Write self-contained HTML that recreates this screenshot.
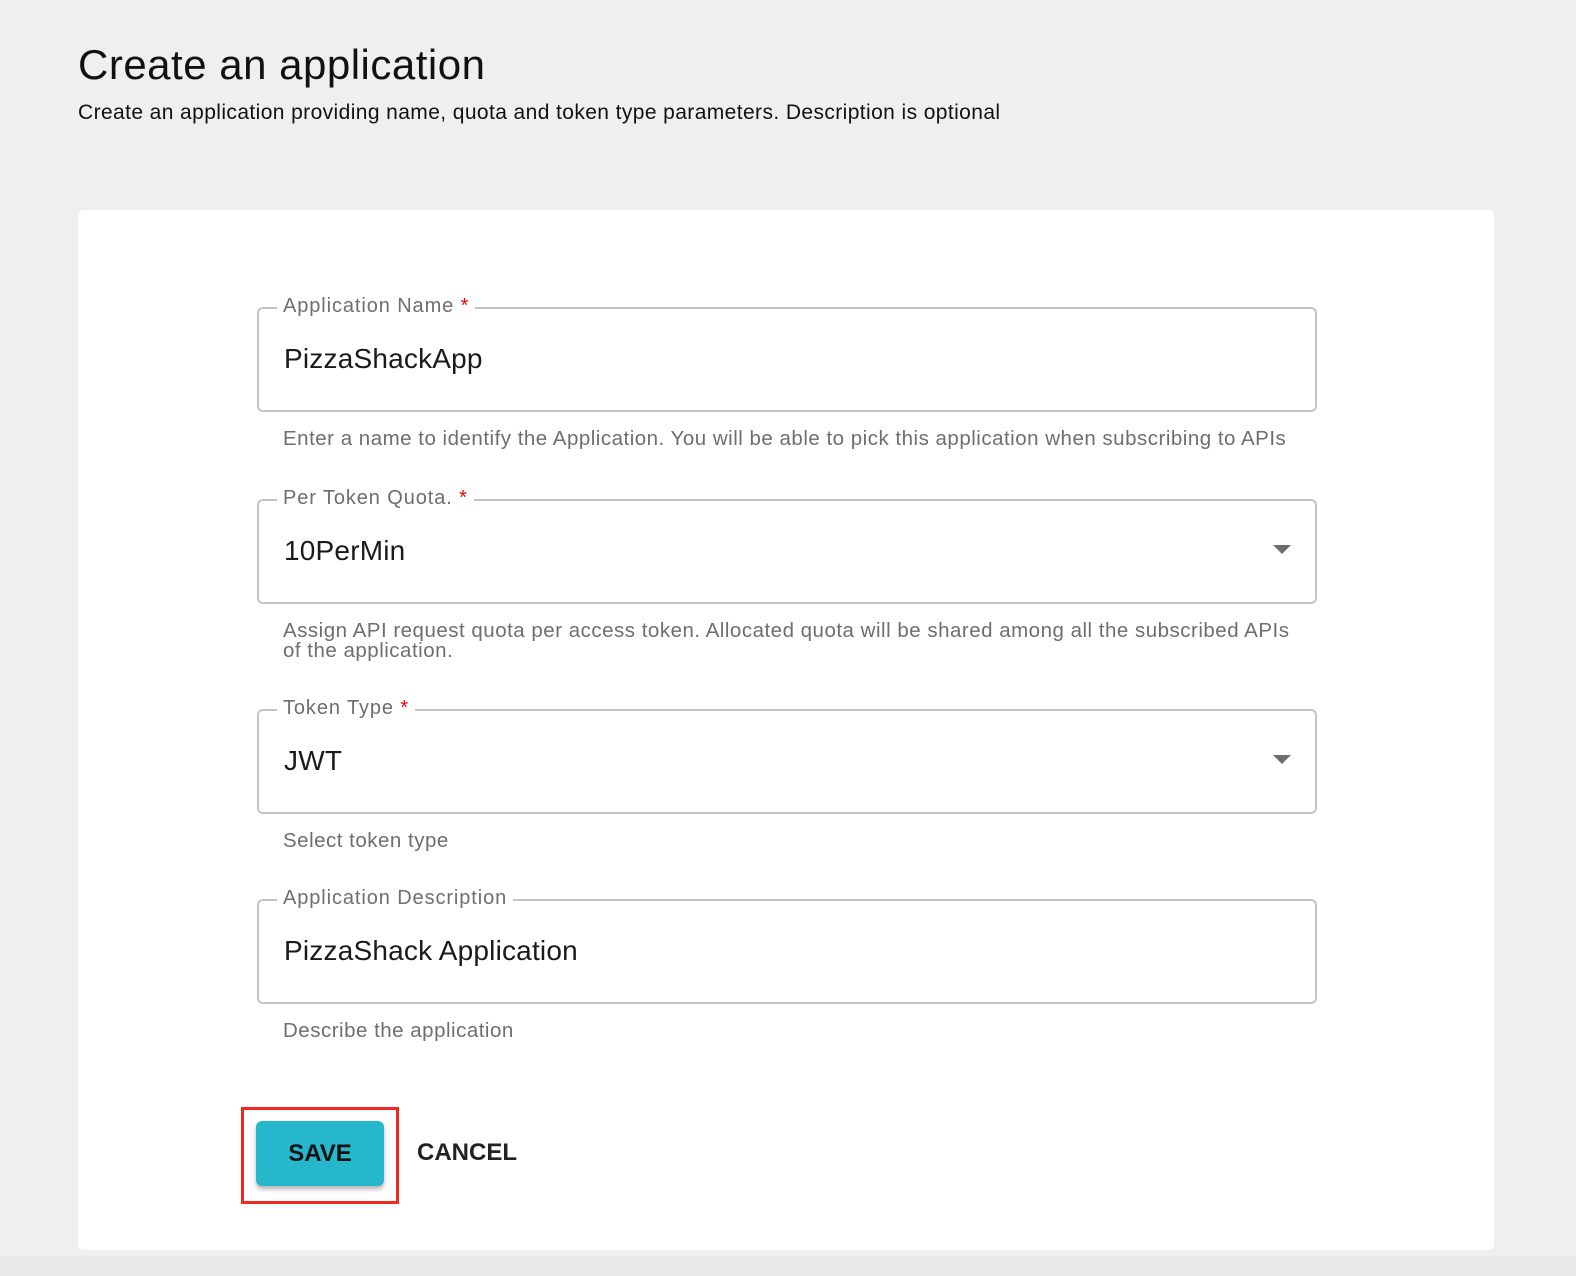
<!DOCTYPE html>
<html><head><style>
*{box-sizing:border-box;margin:0;padding:0}
body{width:1576px;height:1276px;background:#efefef;font-family:"Liberation Sans",sans-serif;position:relative;overflow:hidden}
.abs{position:absolute}
h1{position:absolute;left:78px;top:41px;font-size:42px;font-weight:400;color:#111;letter-spacing:0.5px}
.sub{left:78px;top:101px;font-size:21px;color:#111;letter-spacing:0.4px}
.card{left:78px;top:210px;width:1416px;height:1040px;background:#fff;border-radius:6px}
.bottom{left:0;top:1256px;width:1576px;height:20px;background:#e8e8e8}
.field{position:absolute;left:257px;width:1060px;height:105px;border:2px solid #c4c4c4;border-radius:6px}
.lbl{position:absolute;left:18px;top:-16px;background:#fff;padding:0 6px;font-size:20px;color:#6e6e6e;line-height:26px;letter-spacing:0.9px}
.lbl b{color:#e00;font-weight:400}
.val{position:absolute;left:25px;top:34px;font-size:28px;color:#1a1a1a;letter-spacing:0.2px}
.help{position:absolute;left:283px;font-size:20.5px;color:#6e6e6e;line-height:20px;letter-spacing:0.5px}
.arrow{position:absolute;right:24px;top:44px;width:0;height:0;border-left:9px solid transparent;border-right:9px solid transparent;border-top:9px solid #6e6e6e}
</style></head><body>
<h1>Create an application</h1>
<div class="abs sub">Create an application providing name, quota and token type parameters. Description is optional</div>
<div class="abs card"></div>
<div class="abs bottom"></div>

<div class="field" style="top:307px"><div class="lbl">Application Name <b>*</b></div><div class="val">PizzaShackApp</div></div>
<div class="help" style="top:429px">Enter a name to identify the Application. You will be able to pick this application when subscribing to APIs</div>

<div class="field" style="top:499px"><div class="lbl">Per Token Quota. <b>*</b></div><div class="val">10PerMin</div><div class="arrow"></div></div>
<div class="help" style="top:621px">Assign API request quota per access token. Allocated quota will be shared among all the subscribed APIs<br>of the application.</div>

<div class="field" style="top:709px"><div class="lbl">Token Type <b>*</b></div><div class="val">JWT</div><div class="arrow"></div></div>
<div class="help" style="top:831px">Select token type</div>

<div class="field" style="top:899px"><div class="lbl">Application Description</div><div class="val">PizzaShack Application</div></div>
<div class="help" style="top:1021px">Describe the application</div>

<div class="abs" style="left:241px;top:1107px;width:158px;height:97px;border:3px solid #f2281e"></div>
<div class="abs" style="left:256px;top:1121px;width:128px;height:65px;background:#26b7cd;border-radius:6px;box-shadow:0 3px 5px rgba(0,0,0,.3);font-size:24px;font-weight:700;color:#111;text-align:center;line-height:65px">SAVE</div>
<div class="abs" style="left:417px;top:1139px;font-size:24px;font-weight:700;color:#222">CANCEL</div>
</body></html>
